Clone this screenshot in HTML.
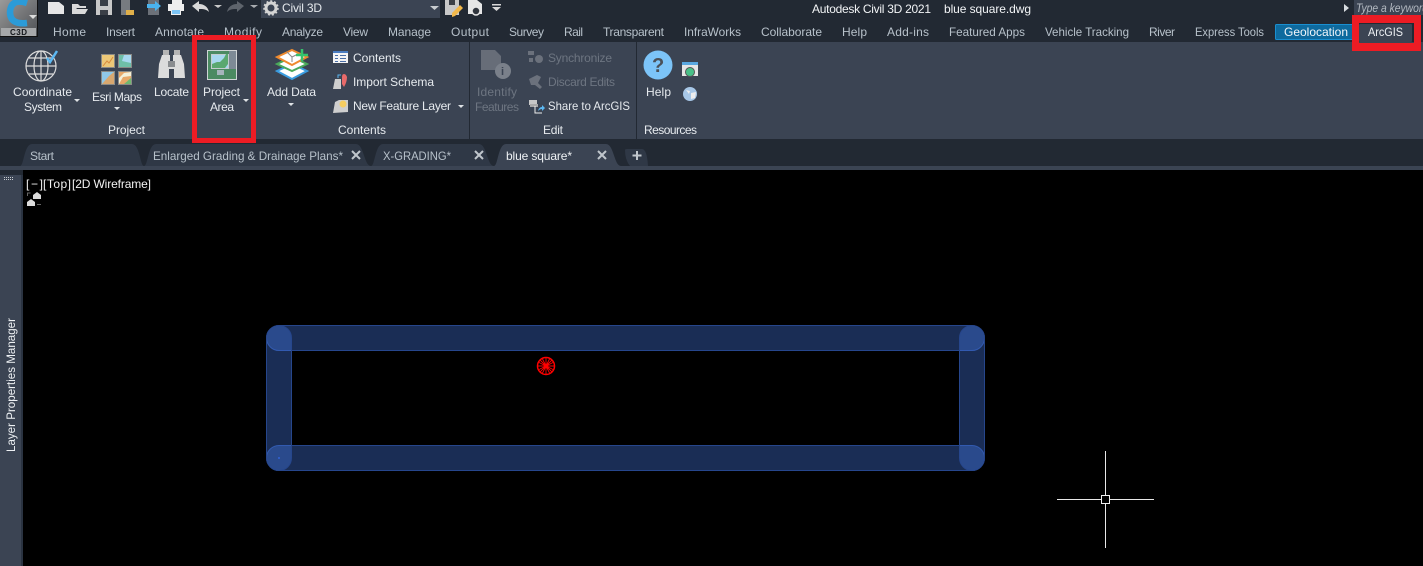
<!DOCTYPE html>
<html><head><meta charset="utf-8"><style>
html,body{margin:0;padding:0;background:#000;width:1423px;height:566px;overflow:hidden}
svg{display:block}
text{font-family:"Liberation Sans",sans-serif;font-size:12px;fill:#e6eaee}
.m text,text.m{fill:#b7c1ca}
</style></head><body>
<svg width="1423" height="566" viewBox="0 0 1423 566" xmlns="http://www.w3.org/2000/svg">
<rect width="1423" height="566" fill="#000"/>
<rect width="1423" height="42" fill="#222933"/>
<rect y="42" width="1423" height="97" fill="#3b4453"/>
<rect y="139" width="1423" height="27" fill="#222933"/>
<rect y="166" width="1423" height="4" fill="#3b4453"/>
<rect y="170" width="23" height="396" fill="#222933"/>
<rect y="175" width="21" height="391" fill="#3b4453"/>
<rect x="21" y="175" width="2" height="391" fill="#2a3341"/>
<!-- ribbon separators -->
<rect x="469" y="42" width="1" height="97" fill="#222933"/><rect x="636" y="42" width="1" height="97" fill="#222933"/>
<!-- logo -->
<defs><linearGradient id="lg" x1="0" y1="0" x2="1" y2="1"><stop offset="0" stop-color="#9a9a9a"/><stop offset="1" stop-color="#4c4f53"/></linearGradient></defs>
<rect x="0" y="0" width="38" height="37" fill="url(#lg)"/>
<rect x="37" y="0" width="1" height="37" fill="#111"/>
<rect x="0" y="36" width="38" height="1" fill="#111"/>
<rect x="1" y="28" width="35" height="8" fill="#a6a8aa"/>
<path d="M27 3Q11 -2 10 12Q10 25 27 23" fill="none" stroke="#2b9bd8" stroke-width="6.500"/>
<path d="M29 15h8l-4 4z" fill="#dcdcdc"/>
<text x="10" y="35" style="font-size:8px;fill:#14171b;font-weight:700" textLength="17">C3D</text>
<!-- QAT -->
<path d="M48 2h11l5 4v8H48z" fill="#e6e6e6"/>
<path d="M72 14V4h6l2 2h6v2h-9z M72 14l4-5h12l-3 5z" fill="#d9d9d9"/>
<path d="M96 0h16v15H96z" fill="#c8c8c8"/><rect x="100" y="0" width="8" height="6" fill="#3a3f47"/><rect x="100" y="10" width="8" height="5" fill="#3a3f47"/>
<rect x="121" y="0" width="9" height="15" fill="#777b80"/><path d="M126 10h8v5h-8z" fill="#e0b04a"/>
<rect x="148" y="0" width="11" height="15" fill="#6b7078"/><path d="M147 4h8V1l6 5-6 5V8h-8z" fill="#4ab3ee"/>
<rect x="172" y="0" width="10" height="4" fill="#eee"/><rect x="168" y="4" width="16" height="7" fill="#eee"/><rect x="171.500" y="9.500" width="9" height="5" fill="#7cc4f4" stroke="#eee"/>
<path d="M192 6l7-5v3c5 0 9 3 10 8-3-3-6-3-10-3v3z" fill="#d8d8d8"/>
<path d="M214 5h8l-4 3z" fill="#c8c8c8"/>
<path d="M244 6l-7-5v3c-5 0-9 3-10 8 3-3 6-3 10-3v3z" fill="#5e646c"/>
<path d="M250 5h8l-4 3z" fill="#a8acb0"/>
<rect x="261" y="0" width="179" height="18" fill="#3b4453"/>
<circle cx="271" cy="8" r="5" fill="none" stroke="#d4d4d4" stroke-width="3"/><circle cx="271" cy="8" r="7" fill="none" stroke="#d4d4d4" stroke-width="1.500" stroke-dasharray="2 2"/>
<text x="282" y="12" textLength="40">Civil 3D</text>
<path d="M430 6h9l-4.500 4z" fill="#c8ccd0"/>
<path d="M445 0h14v15h-14z" fill="#c8c8c8"/><rect x="449" y="0" width="6" height="5" fill="#3a3f47"/><path d="M452 13l8-8 3 3-8 8-3 1z" fill="#f2b84a"/>
<path d="M468 0h9l5 4v10h-14z" fill="#e6e6e6"/><circle cx="476" cy="11" r="4" fill="#30353d" stroke="#e6e6e6" stroke-width="1.500"/>
<rect x="492" y="4" width="9" height="1.500" fill="#d8d8d8"/><path d="M492 7h9l-4.500 4z" fill="#d8d8d8"/>
<text x="812" y="13" textLength="119" style="fill:#f2f4f6">Autodesk Civil 3D 2021</text>
<text x="944" y="13" textLength="87" style="fill:#f2f4f6">blue square.dwg</text>
<path d="M1344 4l5 4-5 4z" fill="#d8dce0"/>
<rect x="1354" y="0" width="69" height="15" fill="#3b4453"/>
<text x="1356" y="12" textLength="72" lengthAdjust="spacingAndGlyphs" font-style="italic" style="fill:#b4bac2;font-size:12px">Type a keyword</text>
<!-- menu tabs -->
<rect x="1275.500" y="24.500" width="78" height="15" rx="1" fill="#0e6a9e" stroke="#1a8fd0"/>
<rect x="1359" y="24" width="53" height="18" rx="1" fill="#3b4453"/>
<g class="m">
<text x="53" y="36" textLength="33">Home</text><text x="106" y="36" textLength="29">Insert</text><text x="155" y="36" textLength="49">Annotate</text><text x="224" y="36" textLength="38">Modify</text><text x="282" y="36" textLength="41">Analyze</text><text x="343" y="36" textLength="25">View</text><text x="388" y="36" textLength="43">Manage</text><text x="451" y="36" textLength="38">Output</text><text x="509" y="36" textLength="35">Survey</text><text x="564" y="36" textLength="19">Rail</text><text x="603" y="36" textLength="61">Transparent</text><text x="684" y="36" textLength="57" lengthAdjust="spacingAndGlyphs">InfraWorks</text><text x="761" y="36" textLength="61">Collaborate</text><text x="842" y="36" textLength="25">Help</text><text x="887" y="36" textLength="42">Add-ins</text><text x="949" y="36" textLength="76" lengthAdjust="spacingAndGlyphs">Featured Apps</text><text x="1045" y="36" textLength="84" lengthAdjust="spacingAndGlyphs">Vehicle Tracking</text><text x="1149" y="36" textLength="26">River</text><text x="1195" y="36" textLength="69" lengthAdjust="spacingAndGlyphs">Express Tools</text>
</g>
<text x="1284" y="36" textLength="64" lengthAdjust="spacingAndGlyphs" style="fill:#f2f6fa">Geolocation</text>
<text x="1368" y="36" textLength="35" lengthAdjust="spacingAndGlyphs" style="fill:#eef1f4">ArcGIS</text>
<!-- Coordinate system icon -->
<g fill="none" stroke="#dcdcdc" stroke-width="1.200"><circle cx="41" cy="66" r="15"/><ellipse cx="41" cy="66" rx="7" ry="15"/><path d="M41 51v30M26 66h30M29 58h24M29 74h24"/></g>
<path d="M47 58l3 4 7-11" fill="none" stroke="#5cb8f2" stroke-width="2.500"/>
<text x="13" y="96" textLength="59">Coordinate</text><text x="24" y="111" textLength="38">System</text>
<path d="M74 99h6l-3 3z" fill="#dfe3e6"/>
<!-- Esri maps -->
<rect x="101.500" y="54.500" width="13" height="13" fill="#ecc878" stroke="#8a8a86"/><rect x="118.500" y="54.500" width="13" height="13" fill="#6fbfa8" stroke="#8a8a86"/><rect x="101.500" y="71.500" width="13" height="13" fill="#8fc8e8" stroke="#8a8a86"/><rect x="118.500" y="71.500" width="13" height="13" fill="#e8a868" stroke="#8a8a86"/>
<path d="M103 66l4-5 2 2 4-6" stroke="#d88a3c" fill="none"/><path d="M124 55l-2 6 9 2v-8z" fill="#a8d8f0"/><path d="M102 84l7-8 5-4v12z" fill="#d8a870"/><path d="M119 84l4-7 8-1v-4l-7 1-5 5z" fill="#f4f0d8"/><path d="M124 84l7-6v6z" fill="#70b870"/>
<text x="92" y="101" textLength="50">Esri Maps</text><path d="M114 107h6l-3 3z" fill="#dfe3e6"/>
<!-- Locate -->
<rect x="163" y="50" width="6" height="5" fill="#b4b4b4"/><rect x="174" y="50" width="6" height="5" fill="#b4b4b4"/>
<path d="M162 55h8v7h3v-7h8l3 9 1 14h-11v-9h-5v9h-11l1-14z" fill="#dcdcdc"/><rect x="168" y="61" width="7" height="6" fill="#8a8d90"/>
<text x="154" y="96" textLength="35">Locate</text>
<!-- Project Area -->
<rect x="207" y="50" width="30" height="30" fill="#cfd4d6"/><rect x="208" y="51" width="28" height="28" fill="#4b8a62"/><rect x="229" y="51" width="7" height="18" fill="#7d8a96"/><rect x="211.500" y="54.500" width="17" height="14" fill="#a8d8f0" stroke="#c4ccd0"/><path d="M212 64l5-2 3 0 4-4 2-4h2v10l-3 4h-13z" fill="#5aa870"/><rect x="217" y="70" width="7" height="5" fill="#a6b4bc"/>
<text x="203" y="96" textLength="37">Project</text><text x="210" y="111" textLength="24">Area</text><path d="M243 99h6l-3 3z" fill="#dfe3e6"/>
<!-- Add Data -->
<path d="M292 64l15 7-15 8-15-8z" fill="#fff" stroke="#3a9ce0" stroke-width="2"/>
<path d="M292 57l15 7-15 7-15-7z" fill="#fff" stroke="#4aa95a" stroke-width="2"/>
<path d="M292 50l15 7-15 8-15-8z" fill="#fff" stroke="#ef8a2e" stroke-width="2"/>
<path d="M287 52l5 5 6-3M292 57v5" stroke="#888" fill="none"/>
<path d="M302 49v12M296 55h12" stroke="#35c26c" stroke-width="2.500"/>
<text x="267" y="96" textLength="49">Add Data</text><path d="M288 103h6l-3 3z" fill="#dfe3e6"/>
<!-- Contents small -->
<rect x="333" y="51" width="15" height="12" fill="#f4f4f4"/><rect x="333" y="51" width="15" height="2" fill="#4a7cc0"/><path d="M335 55.500h3M335 58.500h3M335 61.500h3M340 55.500h6M340 58.500h6M340 61.500h6" stroke="#4a6fa8"/>
<text x="353" y="62" textLength="48">Contents</text>
<path d="M333 89l2-10h6v10z" fill="#cfcfcf"/><path d="M342 84v-7q0-3 2-3t3 3q0 5-3 10z" fill="#e86a6a"/><path d="M338 78v-3h3" stroke="#58b4ee" fill="none"/>
<text x="353" y="86" textLength="81">Import Schema</text>
<path d="M333 113l2-11 4-2h9v12z" fill="#cfcfcf"/><circle cx="343" cy="104" r="3.500" fill="#f6cd60"/>
<text x="353" y="110" textLength="98">New Feature Layer</text><path d="M458 105h6l-3 3z" fill="#dfe3e6"/>
<text x="108" y="134" textLength="37">Project</text><text x="338" y="134" textLength="48">Contents</text>
<!-- Edit -->
<path d="M481 50h14l6 6v14h-20z" fill="#676d78"/><circle cx="503" cy="71" r="8" fill="#7a808a"/><text x="501" y="75" style="fill:#3b4453;font-size:11px;font-weight:700">i</text>
<text x="477" y="96" textLength="40" style="fill:#6d7581">Identify</text><text x="475" y="111" textLength="44" style="fill:#6d7581">Features</text>
<rect x="528" y="51" width="6" height="4" fill="#6b717c"/><rect x="529" y="58" width="4" height="4" fill="#6b717c"/><circle cx="539" cy="59" r="4" fill="#6b717c"/><text x="548" y="62" textLength="64" style="fill:#6d7581">Synchronize</text>
<path d="M529 79l8-4 4 2-3 6 4 4-2 2-5-4-4 0z" fill="#6b717c"/><text x="548" y="86" textLength="67" style="fill:#6d7581">Discard Edits</text>
<rect x="529" y="100" width="8" height="5" fill="#c8c8c8"/><rect x="530" y="104" width="8" height="3" fill="#aaa"/><path d="M535 106v7h7" stroke="#eee" fill="none"/><path d="M538 111q1-4 4-4v-2l3 3-3 3v-2q-2 0-4 2z" fill="#5cb8f2"/>
<text x="548" y="110" textLength="82" lengthAdjust="spacingAndGlyphs">Share to ArcGIS</text>
<text x="543" y="134" textLength="20">Edit</text>
<!-- Resources -->
<circle cx="658" cy="65" r="14.500" fill="#7cc4f8"/><text x="652" y="72" style="fill:#4a5058;font-size:20px;font-weight:700">?</text>
<text x="646" y="96" textLength="25">Help</text>
<rect x="682" y="62" width="16" height="14" fill="#e6e6e6"/><rect x="682" y="62" width="16" height="3" fill="#5aa8e0"/><circle cx="690" cy="72" r="4.500" fill="#48c088" stroke="#555"/>
<circle cx="690" cy="94" r="7" fill="#a8c8e8"/><path d="M686 90l4 1-1 3zM691 93l5-1-1 6-4 1z" fill="#eee"/>
<text x="644" y="134" textLength="53">Resources</text>
<!-- Document tabs -->
<path d="M20 166c4 0 4-22 12-22h100c8 0 8 22 12 22z" fill="#2f3846"/>
<path d="M144 166c4 0 4-22 12-22h200c8 0 8 22 15 22z" fill="#2f3846"/>
<path d="M371 166c4 0 4-22 12-22h96c8 0 8 22 15 22z" fill="#2f3846"/>
<path d="M494 166c4 0 4-22 12-22h100c8 0 8 22 15 22z" fill="#3b4453"/>
<path d="M625 150q0-1 2-1h15q5 0 6 17h-18q-5-6-5-16z" fill="#2f3846"/>
<g class="m"><text x="30" y="160" textLength="24">Start</text><text x="153" y="160" textLength="190" lengthAdjust="spacingAndGlyphs">Enlarged Grading &amp; Drainage Plans*</text><text x="383" y="160" textLength="68" lengthAdjust="spacingAndGlyphs">X-GRADING*</text></g>
<text x="506" y="160" textLength="66" style="fill:#eef1f4">blue square*</text>
<g stroke="#c0c6cc" stroke-width="2"><path d="M352 151l8 8M360 151l-8 8M475 151l8 8M483 151l-8 8M598 151l8 8M606 151l-8 8"/></g>
<path d="M637 151v9M632.500 155.500h9" stroke="#c0c6cc" stroke-width="2"/>
<!-- left panel -->
<g fill="#c8ccd0"><rect x="4" y="177" width="1" height="1"/><rect x="6" y="177" width="1" height="1"/><rect x="8" y="177" width="1" height="1"/><rect x="10" y="177" width="1" height="1"/><rect x="12" y="177" width="1" height="1"/><rect x="4" y="179" width="1" height="1"/><rect x="6" y="179" width="1" height="1"/><rect x="8" y="179" width="1" height="1"/><rect x="10" y="179" width="1" height="1"/><rect x="12" y="179" width="1" height="1"/></g>
<text transform="translate(15,452) rotate(-90)" textLength="134" lengthAdjust="spacingAndGlyphs" style="fill:#eef1f4">Layer Properties Manager</text>
<!-- viewport label -->
<text x="26" y="188" style="fill:#f2f2f2" textLength="17">[−]</text><text x="43" y="188" style="fill:#f2f2f2" textLength="28">[Top]</text><text x="72" y="188" style="fill:#f2f2f2" textLength="79">[2D Wireframe]</text>
<path d="M33 195l4-3 4 3v4h-8zM27 202l4-3 4 3v4h-8z" fill="#dcdcdc"/>
<path d="M27.500 196v-3h3M37 204.500h4" stroke="#666" fill="none"/>
<!-- blue polyline -->
<g fill="#4a80f3" fill-opacity=".35" stroke="#26468c" stroke-width="1">
<rect x="266.500" y="325.500" width="718" height="25" rx="12.500"/>
<rect x="266.500" y="445.500" width="718" height="25" rx="12.500"/>
<rect x="266.500" y="325.500" width="25" height="145" rx="12.500"/>
<rect x="959.500" y="325.500" width="25" height="145" rx="12.500"/>
</g>
<rect x="278" y="457" width="2" height="2" fill="#2f5cc4"/>
<!-- red symbol -->
<g stroke="#f00" fill="none"><circle cx="546" cy="366" r="8.500" stroke-width="1.500"/><path stroke-width=".9" d="M546 357v18M537 366h18M540 360l12 12M552 360l-12 12M542 358l8 16M550 358l-8 16M538 362l16 8M554 362l-16 8"/></g>
<circle cx="546" cy="366" r="1.500" fill="#f00"/>
<!-- crosshair -->
<path d="M1105.500 451v97M1057 499.500h97" stroke="#e8e8e8" stroke-width="1"/>
<rect x="1101.500" y="495.500" width="8" height="8" fill="#000" stroke="#f0f0f0" stroke-width="1"/>
<!-- red highlights -->
<rect x="194.500" y="37.500" width="59" height="103" fill="none" stroke="#ed1c24" stroke-width="5"/>
<path d="M1352 15h69v36h-69zM1359 23v20h55V23z" fill="#ed1c24" fill-rule="evenodd"/>
</svg>
</body></html>
